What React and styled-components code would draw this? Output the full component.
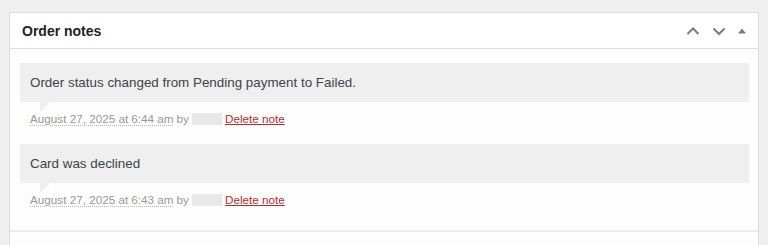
import styled, { createGlobalStyle } from 'styled-components';

const GlobalStyle = createGlobalStyle`
  html, body {
    margin: 0;
    padding: 0;
    background: #f0f0f1;
    font-family: "Liberation Sans", Arial, sans-serif;
  }
`;

const notes = [
  { id: 1, text: 'Order status changed from Pending payment to Failed.', date: 'August 27, 2025 at 6:44 am' },
  { id: 2, text: 'Card was declined', date: 'August 27, 2025 at 6:43 am' },
];

function ChevronUp() {
  return (
    <svg width="14" height="14" viewBox="0 0 14 14" fill="none">
      <path d="M1.5 10 L7 4.5 L12.5 10" stroke="#787c82" strokeWidth="2" />
    </svg>
  );
}

function ChevronDown() {
  return (
    <svg width="14" height="14" viewBox="0 0 14 14" fill="none">
      <path d="M1.5 4.5 L7 10 L12.5 4.5" stroke="#787c82" strokeWidth="2" />
    </svg>
  );
}

function Caret() {
  return (
    <svg width="10" height="10" viewBox="0 0 10 10">
      <path d="M1 7.5 L5 2.5 L9 7.5 Z" fill="#787c82" />
    </svg>
  );
}

export default function App() {
  return (
    <>
      <GlobalStyle />
      <Page>
        <Panel>
          <Header>
            <h2>Order notes</h2>
            <Controls>
              <IconButton><ChevronUp /></IconButton>
              <IconButton><ChevronDown /></IconButton>
              <IconButton $small><Caret /></IconButton>
            </Controls>
          </Header>
          <Inside>
            <NoteList>
              {notes.map((note) => (
                <Note key={note.id}>
                  <NoteContent>
                    <p>{note.text}</p>
                  </NoteContent>
                  <Meta>
                    <abbr>{note.date}</abbr> by <Redacted /> <DeleteLink href="#">Delete note</DeleteLink>
                  </Meta>
                </Note>
              ))}
            </NoteList>
          </Inside>
          <AddNote />
        </Panel>
      </Page>
    </>
  );
}

const Page = styled.div`
  padding: 12px 9px 0 9px;
  height: 245px;
  box-sizing: border-box;
  overflow: hidden;
`;

const Panel = styled.div`
  background: #fdfdfd;
  border: 1px solid #dcdcde;
  border-bottom: none;
  min-height: 260px;
`;

const Header = styled.div`
  height: 35px;
  display: flex;
  align-items: center;
  justify-content: space-between;
  padding: 0 12px;
  border-bottom: 1px solid #dcdcde;
  background: #fff;

  h2 {
    margin: 0;
    font-size: 14px;
    font-weight: 700;
    color: #1d2327;
  }
`;

const Controls = styled.div`
  display: flex;
  align-items: center;
  margin-right: -6px;
`;

const IconButton = styled.span`
  width: ${(props) => (props.$small ? '20px' : '26px')};
  height: 26px;
  display: flex;
  align-items: center;
  justify-content: center;
`;

const Inside = styled.div`
  padding: 14px 9px 5px 10px;
`;

const NoteList = styled.ul`
  list-style: none;
  margin: 0;
  padding: 0;
`;

const Note = styled.li`
  margin: 0 0 8px;
`;

const NoteContent = styled.div`
  position: relative;
  background: #efefef;
  padding: 10px;

  p {
    margin: 0;
    font-size: 13.4px;
    line-height: 19px;
    color: #3c434a;
  }

  &::after {
    content: "";
    position: absolute;
    bottom: -10px;
    left: 20px;
    width: 0;
    height: 0;
    border-width: 10px 10px 0 0;
    border-style: solid;
    border-color: #efefef transparent;
  }
`;

const Meta = styled.p`
  margin: 0;
  padding: 9px 10px 9px;
  font-size: 11.7px;
  line-height: 16px;
  color: #999;
  display: flex;
  align-items: center;
  gap: 3px;

  abbr {
    text-decoration: underline dotted #bbb;
    text-underline-offset: 2px;
    cursor: help;
  }
`;

const Redacted = styled.span`
  display: inline-block;
  width: 30px;
  height: 12px;
  background: #e8e8e8;
`;

const DeleteLink = styled.a`
  color: #b32d2e;
  text-decoration: underline;
`;

const AddNote = styled.div`
  border-top: 2px solid #eeeeee;
`;
